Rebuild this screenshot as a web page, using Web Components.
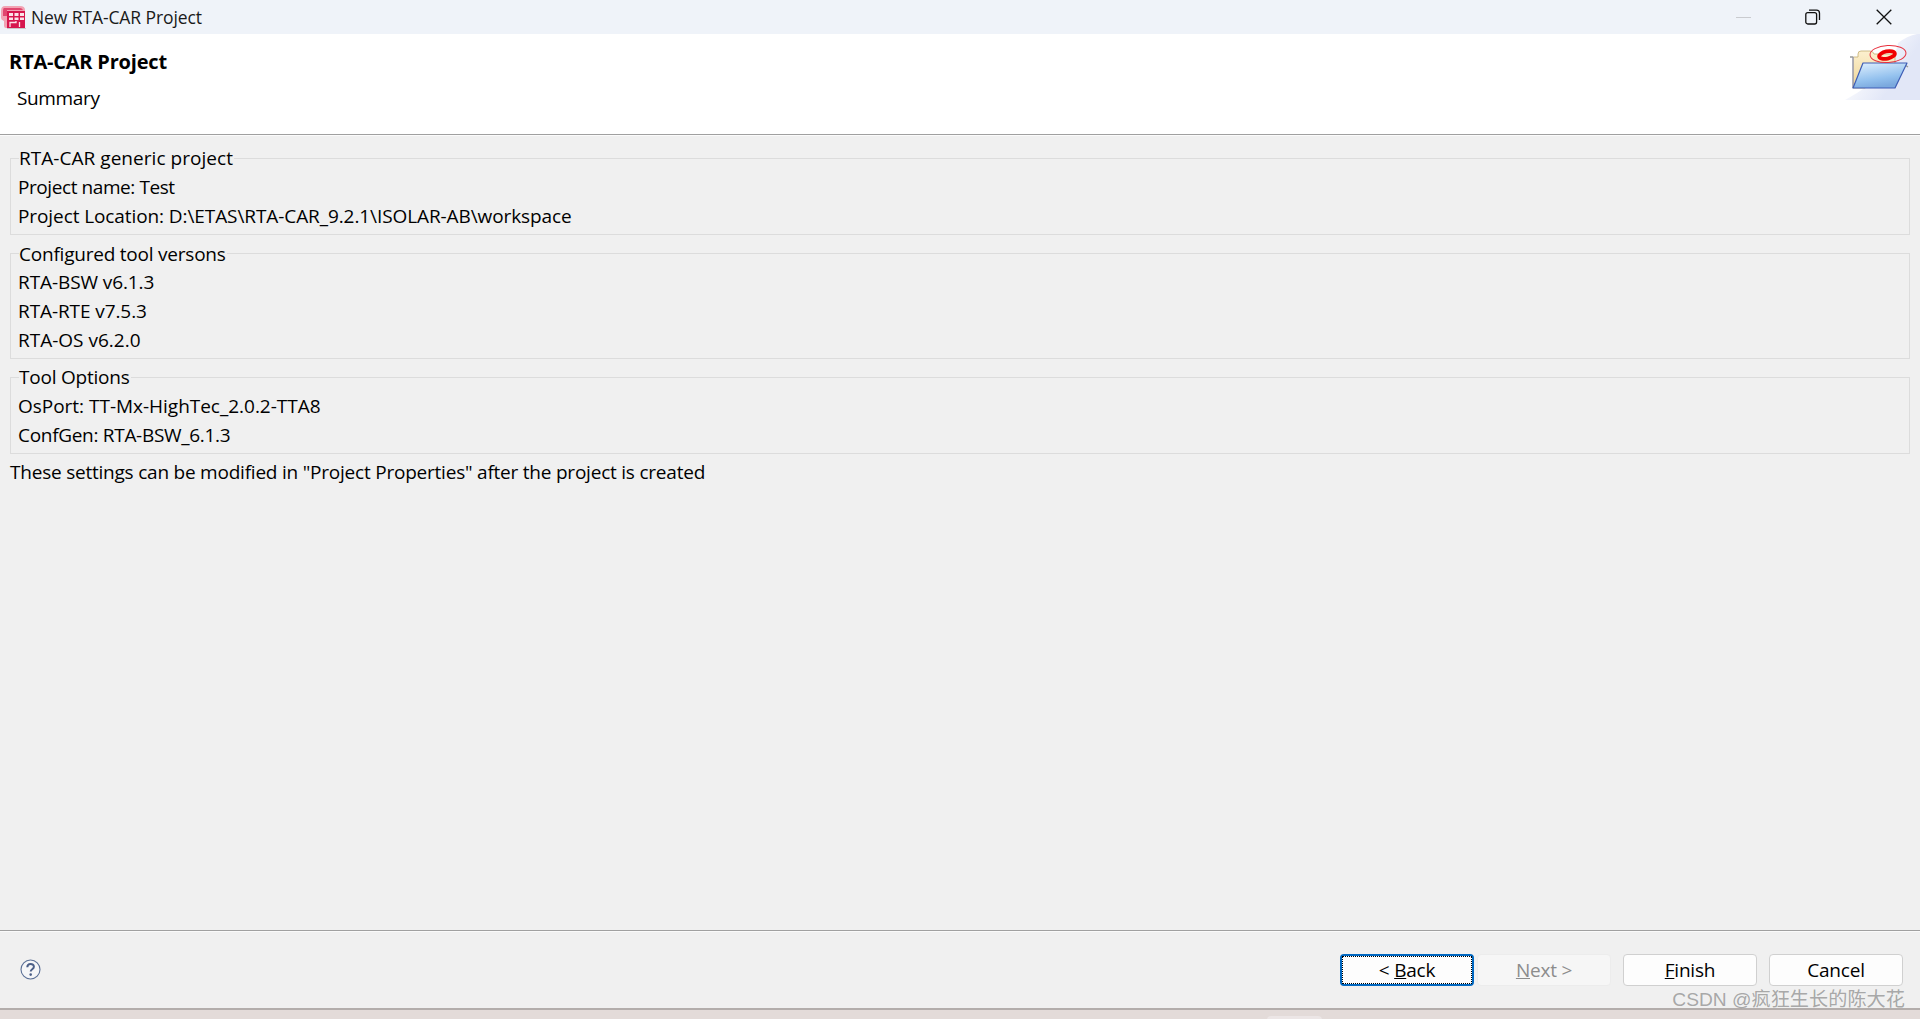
<!DOCTYPE html>
<html><head><meta charset="utf-8">
<style>
html,body{margin:0;height:100%;}
body{width:1920px;height:1019px;overflow:hidden;background:#f0f0f0;font-family:"Open Sans","Noto Sans CJK SC",sans-serif;color:#000;}
wizard-dialog{height:100%;}
</style></head><body>
<template id="t-dialog"><style>
:host{display:flex;flex-direction:column;height:1019px;background:#f0f0f0;position:relative}
.main{flex:1;display:flex;flex-direction:column;padding:0 10px;min-height:0}
.fill{flex:1}
.wm{position:absolute;right:15px;top:987px;font:19.2px "Liberation Sans","Noto Sans CJK SC",sans-serif;color:rgba(120,120,120,.62);line-height:26px;white-space:nowrap}
.strip{height:11px;background:#e3dbd9;border-top:2px solid #b3adab;box-sizing:border-box;flex:none;position:relative}
.tab{position:absolute;left:1267px;width:55px;top:6px;height:4px;background:#ece6e6;border-radius:5px 5px 0 0}
</style>
<slot name="title"></slot><slot name="banner"></slot>
<div class="main"><slot></slot><div class="fill"></div></div>
<slot name="footer"></slot>
<div class="strip"><div class="tab"></div></div>
<div class="wm">CSDN @疯狂生长的陈大花</div>
</template>

<template id="t-title"><style>
:host{display:flex;align-items:center;height:34px;background:#eff3f9;flex:none;font-size:17.5px;color:#1a1a1a;padding-right:1px;box-sizing:border-box}
svg{flex:none}
.ic{width:31px;padding:0 0 0 1px;box-sizing:border-box;display:flex;}
.t{flex:1;letter-spacing:-.1px}
.b{width:71px;height:34px;display:flex;align-items:center;justify-content:center}
.m{width:69px;padding-left:2px;box-sizing:border-box}
</style>
<div class="ic"><svg width="25" height="24" viewBox="0 0 25 24">
<path d="M4 1h15q5 0 5 4v2H8v16H5q-2 0-2-2v-5q-3-1-3-3V6q0-5 4-5z" fill="#f2a3b4"/>
<path d="M3 3h16q2 0 3 2H6v6H2V6q0-3 1-3z" fill="#e0476f"/>
<rect x="6" y="6" width="18" height="17" fill="#d6174e"/>
<path d="M8 8h4v3H8zM13.500 8h4v3h-4zM19 8h4v3h-4zM8 12.500h4V15H8zM13.500 12.500h4V15h-4zM19 12.500h4V15h-4z" fill="#fbe3e9"/>
<path d="M9 22v-4.500h6V16M18.500 22v-5" stroke="#fbe3e9" stroke-width="1.300" fill="none"/>
<path d="M6 23.500h19" stroke="#c9c9c9"/>
</svg></div>
<div class="t"><slot></slot></div>
<div class="b m"><svg width="16" height="16"><path d="M0 8.500h15" stroke="#c9cbcf" /></svg></div>
<div class="b"><svg width="16" height="16" viewBox="0 0 16 16" fill="none" stroke="#111" stroke-width="1.300"><rect x=".8" y="3.600" width="10.800" height="11.400" rx="2"/><path d="M4 1.200h7.500a3 3 0 0 1 3 3V11"/></svg></div>
<div class="b"><svg width="16" height="16" viewBox="0 0 16 16" fill="none" stroke="#111" stroke-width="1.300"><path d="M.7.7l14.600 14.600M15.300.7L.7 15.300"/></svg></div>
</template>

<template id="t-banner"><style>
:host{display:flex;height:100px;background:#fff;border-bottom:1px solid #a0a0a0;box-shadow:0 1px #fbfbfb;flex:none;position:relative}
.tx{flex:1;padding:15px 0 0 9px}
h1{margin:0;font-size:20px;font-weight:700;line-height:26px;letter-spacing:-.2px}
p{margin:10px 0 0 8px;font-size:19px;line-height:26px;letter-spacing:-.35px}
svg{flex:none;display:block}
</style>
<div class="tx"><h1><slot name="h"></slot></h1><p><slot name="s"></slot></p></div>
<svg width="75" height="66" viewBox="0 0 75 66">
<defs>
<linearGradient id="bg" x1="0" y1="0" x2="1" y2=".6"><stop offset=".25" stop-color="#fff"/><stop offset=".8" stop-color="#e2e7f7"/></linearGradient>
<linearGradient id="fr" x1="0" y1="0" x2=".35" y2="1"><stop offset="0" stop-color="#e2f1fe"/><stop offset=".7" stop-color="#93c1ee"/><stop offset="1" stop-color="#7ba9de"/></linearGradient>
<linearGradient id="bk" x1="0" y1="0" x2="0" y2="1"><stop offset="0" stop-color="#fcf0cf"/><stop offset="1" stop-color="#eed596"/></linearGradient>
</defs>
<path d="M0 66Q48 40 53 9Q62 2 72 0H75V66Z" fill="url(#bg)"/>
<path d="M5 23h3M60 31l3 2" stroke="#9a9a9a" stroke-width="1.500" fill="none"/>
<path d="M8 54V23h5v-3q0-3 3-3h9q3 0 4 3h21v12L20 54z" fill="url(#bk)" stroke="#c3ad72" stroke-width=".8"/>
<path d="M8 23v31" stroke="#8b93b6" stroke-width="1.200"/>
<path d="M18 29H62L50 54H8Z" fill="url(#fr)" stroke="#3e5db5" stroke-width="1.200" stroke-linejoin="round"/>
<ellipse cx="43" cy="20" rx="18" ry="8.500" transform="rotate(-3 43 20)" fill="none" stroke="#e8323f" stroke-width="1"/>
<ellipse cx="42" cy="21" rx="8" ry="3.600" transform="rotate(-12 42 21)" fill="none" stroke="#f00000" stroke-width="3.800"/>
</svg>
</template>

<template id="t-group"><style>
:host{display:block;margin-top:var(--mt,0px);}
fieldset{margin:0;border:1px solid #dcdcdc;padding:0 8px;min-width:0}
legend{padding:0 1px 0 0;margin-left:0;font-size:19px;line-height:24px;letter-spacing:-.22px;height:24px}
.b{padding:2.500px 0 3px}
::slotted(div){font-size:19px;line-height:29px;letter-spacing:var(--ls,-.22px);margin-left:-1px}
</style>
<fieldset><legend><slot name="legend"></slot></legend><div class="b"><slot></slot></div></fieldset>
</template>

<template id="t-footer"><style>
:host{display:flex;align-items:center;height:77px;flex:none;border-top:1px solid #a0a0a0;box-shadow:inset 0 1px #fafafa;background:#f0f0f0;padding:0 17px 0 20px;box-sizing:content-box}
svg{flex:none}
.sp{flex:1}
.r{display:flex;align-items:center}
</style>
<svg width="21" height="21" viewBox="0 0 21 21"><circle cx="10.500" cy="10.500" r="9.500" fill="#f5f6f8" stroke="#5a6f96" stroke-width="1.100"/><path d="M7.300 8.200c0-4.300 6.600-4.300 6.600-.4 0 2.500-3.200 2.500-3.200 4.800" fill="none" stroke="#4b5f88" stroke-width="2"/><circle cx="10.700" cy="15.600" r="1.300" fill="#4b5f88"/></svg>
<div class="sp"></div><div class="r"><slot></slot></div>
</template>

<template id="t-button"><style>
:host{display:inline-flex;flex:none;margin-left:var(--ml,0);}
.btn{width:134px;height:32px;box-sizing:border-box;border:1px solid #d0d0d0;border-radius:4px;background:#fdfdfd;display:flex;align-items:center;justify-content:center;font-size:19px;letter-spacing:-.22px;color:#000;position:relative;white-space:pre}
:host([disabled]) .btn{background:#f6f6f6;border-color:#ececec;color:#8c8c8c}
:host([focused]) .btn{border:2px solid #0067c0}
:host([focused]) .btn::after{content:"";position:absolute;inset:0;border:1px dotted #000}
</style>
<div class="btn"><span><slot></slot></span></div>
</template>

<wizard-dialog>
<wizard-title slot="title">New RTA-CAR Project</wizard-title>
<wizard-banner slot="banner"><span slot="h">RTA-CAR Project</span><span slot="s">Summary</span></wizard-banner>
<option-group style="--mt:11px"><span slot="legend" style="letter-spacing:.04px">RTA-CAR generic project</span><div style="--ls:-.42px">Project name: Test</div><div style="--ls:-.09px">Project Location: D:\ETAS\RTA-CAR_9.2.1\ISOLAR-AB\workspace</div></option-group>
<option-group style="--mt:7px"><span slot="legend">Configured tool versons</span><div style="--ls:-.09px">RTA-BSW v6.1.3</div><div style="--ls:-.09px">RTA-RTE v7.5.3</div><div style="--ls:0px">RTA-OS v6.2.0</div></option-group>
<option-group style="--mt:6px"><span slot="legend">Tool Options</span><div style="--ls:-.02px">OsPort: TT-Mx-HighTec_2.0.2-TTA8</div><div style="--ls:-.3px">ConfGen: RTA-BSW_6.1.3</div></option-group>
<note-line>These settings can be modified in "Project Properties" after the project is created</note-line>
<wizard-footer slot="footer">
<wiz-button focused>&lt; <u>B</u>ack</wiz-button>
<wiz-button disabled style="--ml:3px"><u>N</u>ext &gt;</wiz-button>
<wiz-button style="--ml:12px"><u>F</u>inish</wiz-button>
<wiz-button style="--ml:12px">Cancel</wiz-button>
</wizard-footer>
</wizard-dialog>

<script>
function def(tag,tid){customElements.define(tag,class extends HTMLElement{constructor(){super();this.attachShadow({mode:"open"}).appendChild(document.getElementById(tid).content.cloneNode(true));}});}
def("wizard-dialog","t-dialog");def("wizard-title","t-title");def("wizard-banner","t-banner");def("option-group","t-group");def("wizard-footer","t-footer");def("wiz-button","t-button");
customElements.define("note-line",class extends HTMLElement{constructor(){super();const s=this.attachShadow({mode:"open"});s.innerHTML='<style>:host{display:block;font-size:19px;line-height:24px;letter-spacing:-.22px;margin-top:6px}</style><slot></slot>';}});
</script>
</body></html>
